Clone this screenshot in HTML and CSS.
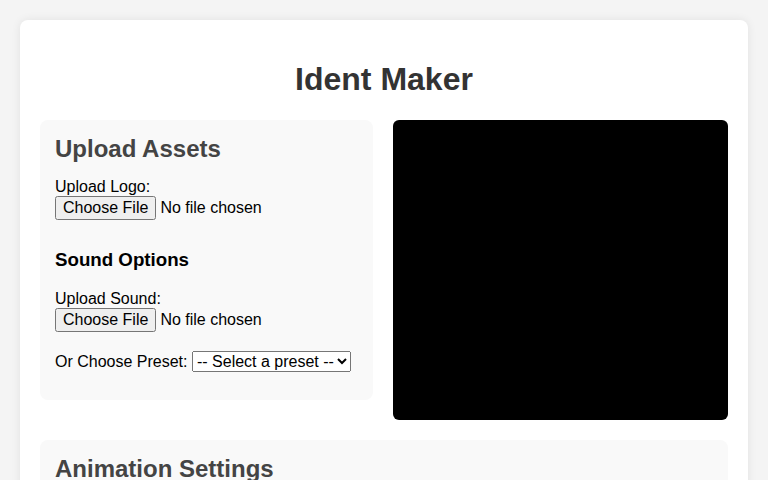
FILE: index.html
```html
<!DOCTYPE html>
<html lang="en">
<head>
<meta charset="utf-8">
<title>Ident Maker</title>
<link rel="stylesheet" href="styles.css">
</head>
<body>
<div class="container">
  <h1 class="title">Ident Maker</h1>
  <div class="top-grid">
    <div class="panel">
      <h2 class="panel-title">Upload Assets</h2>
      <div class="field field-logo">
        <label class="field-label" for="logo">Upload Logo:</label>
        <input class="file-input" type="file" id="logo">
      </div>
      <h3 class="sub-title">Sound Options</h3>
      <div class="field">
        <label class="field-label" for="sound">Upload Sound:</label>
        <input class="file-input" type="file" id="sound">
      </div>
      <div class="field field-last">
        <label class="inline-label" for="preset">Or Choose Preset:</label>
        <select class="preset-select" id="preset">
          <option>-- Select a preset --</option>
        </select>
      </div>
    </div>
    <div class="preview"></div>
  </div>
  <div class="panel panel-wide">
    <h2 class="panel-title">Animation Settings</h2>
  </div>
</div>
</body>
</html>
```

FILE: styles.css
```css
html, body {
  margin: 0;
  padding: 0;
}
body {
  background: #f4f4f4;
  padding: 20px;
  font-family: "Liberation Sans", Arial, sans-serif;
  font-size: 16px;
  color: #000;
}
.container {
  background: #fff;
  border-radius: 8px;
  box-shadow: 0 0 10px rgba(0, 0, 0, 0.08);
  padding: 20px;
}
.title {
  text-align: center;
  color: #333;
  font-size: 32px;
  margin: 21px 0 22px;
  line-height: 37px;
}
.top-grid {
  display: grid;
  grid-template-columns: 333fr 335fr;
  gap: 20px;
  align-items: start;
}
.panel {
  background: #f9f9f9;
  border-radius: 8px;
  padding: 15px 15px 27px;
}
.panel-title {
  margin: 0 0 14px;
  font-size: 24px;
  line-height: 28px;
  color: #444;
}
.field {
  margin-bottom: 19px;
}
.field-logo {
  margin-bottom: 29px;
}
.field-last {
  margin-bottom: 0;
}
.field-label {
  display: block;
  line-height: 19px;
}
.inline-label {
  line-height: 22px;
}
.file-input, .preset-select {
  font-family: "Liberation Sans", Arial, sans-serif;
  font-size: 16px;
}
.file-input {
  display: block;
}
.sub-title {
  font-size: 18.72px;
  line-height: 22px;
  margin: 0 0 18px;
}
.preview {
  background: #000;
  border-radius: 6px;
  height: 300px;
}
.panel-wide {
  margin-top: 20px;
}
```
